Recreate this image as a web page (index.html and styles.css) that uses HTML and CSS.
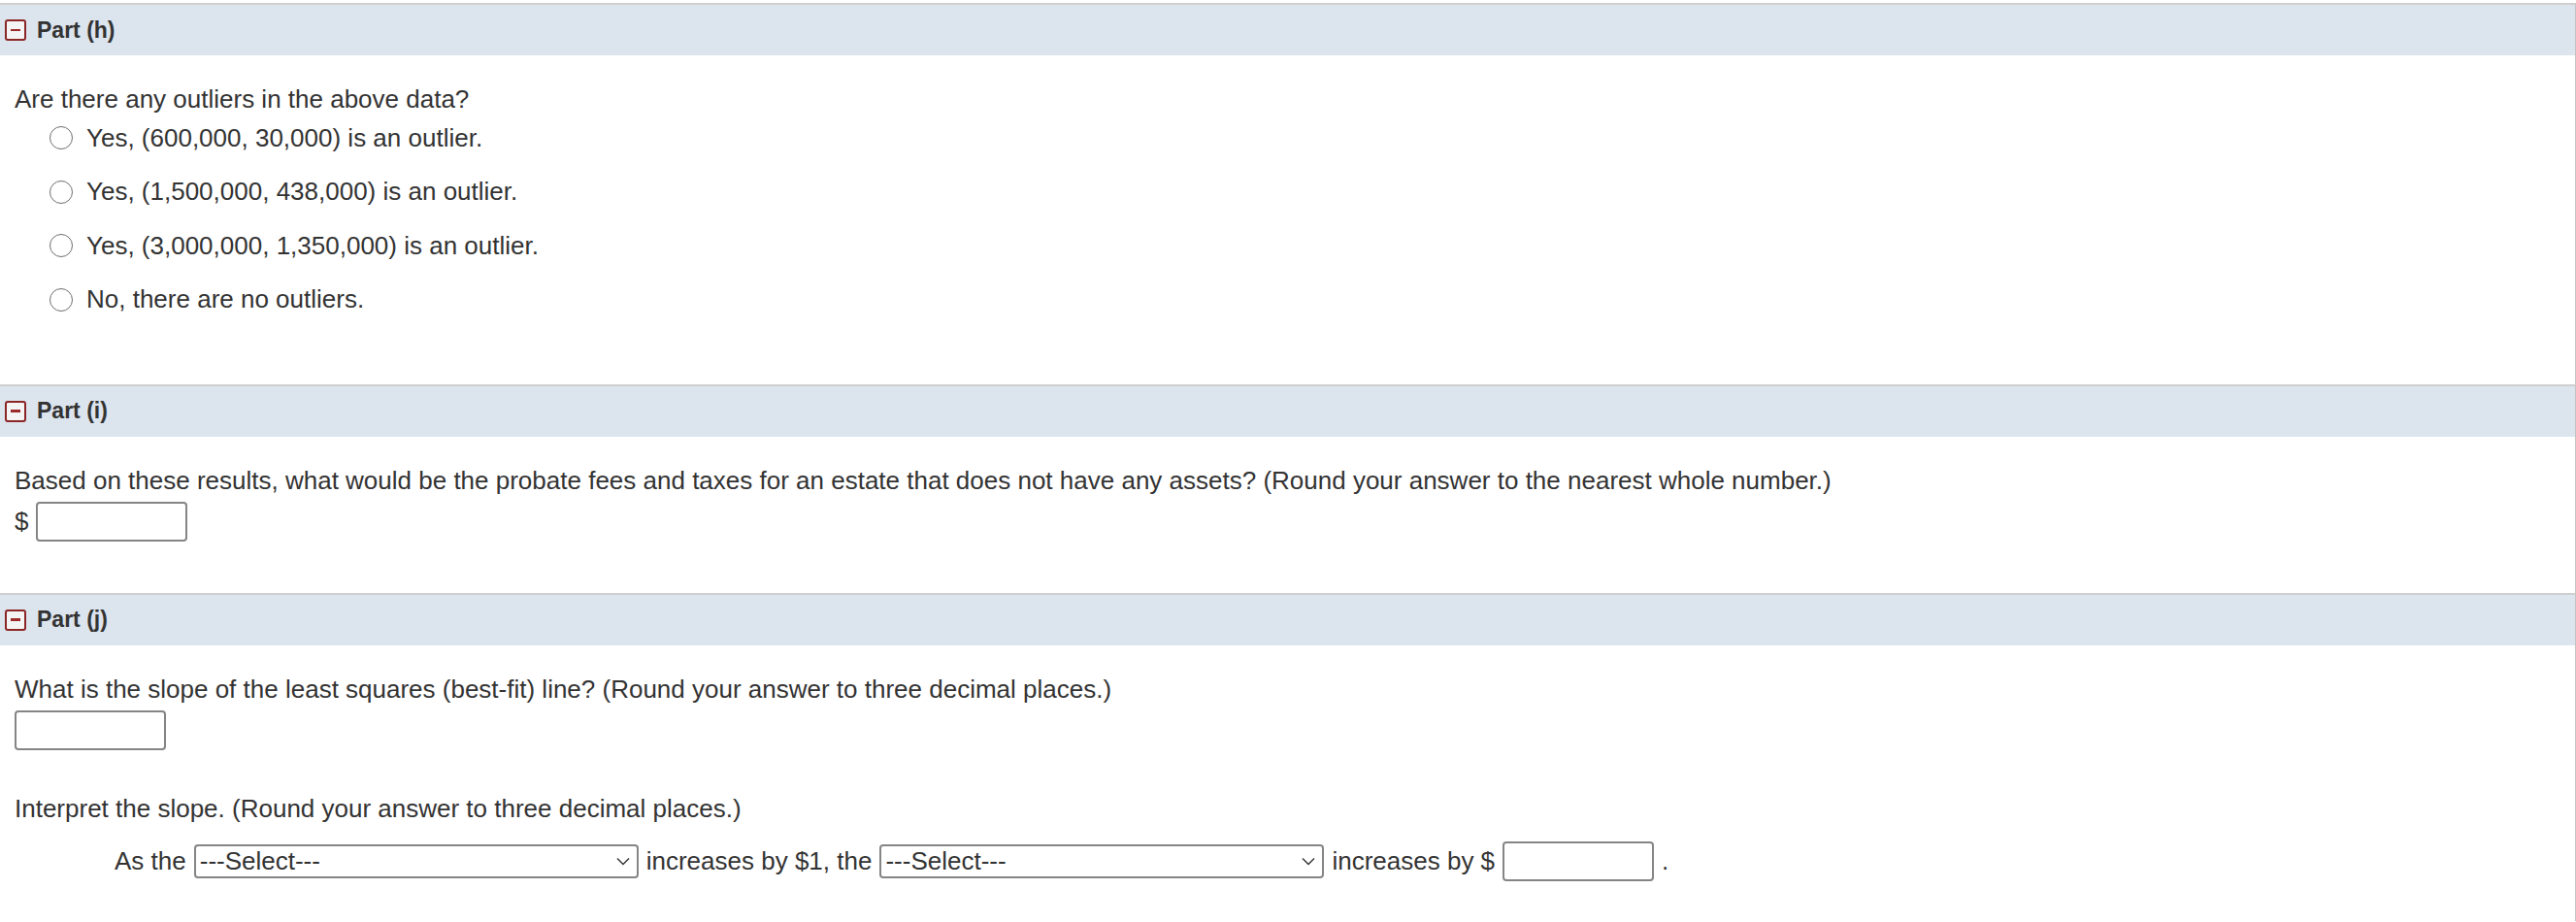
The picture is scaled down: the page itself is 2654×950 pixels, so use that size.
FILE: index.html
```html
<!DOCTYPE html>
<html lang="en">
<head>
<meta charset="utf-8">
<title>Parts h, i, j</title>
<link rel="stylesheet" href="styles.css">
</head>
<body>
<div class="page">
  <section class="part part-h">
    <div class="part-header">
      <span class="toggle"><span class="minus"></span></span>
      <span class="part-title">Part (h)</span>
    </div>
    <div class="part-body">
      <p class="q">Are there any outliers in the above data?</p>
      <ul class="options">
        <li class="option"><span class="radio"></span><span>Yes, (600,000, 30,000) is an outlier.</span></li>
        <li class="option"><span class="radio"></span><span>Yes, (1,500,000, 438,000) is an outlier.</span></li>
        <li class="option"><span class="radio"></span><span>Yes, (3,000,000, 1,350,000) is an outlier.</span></li>
        <li class="option"><span class="radio"></span><span>No, there are no outliers.</span></li>
      </ul>
    </div>
  </section>

  <section class="part part-i">
    <div class="part-header">
      <span class="toggle"><span class="minus"></span></span>
      <span class="part-title">Part (i)</span>
    </div>
    <div class="part-body">
      <p class="q">Based on these results, what would be the probate fees and taxes for an estate that does not have any assets? (Round your answer to the nearest whole number.)</p>
      <div class="answer-row">
        <span>$</span>
        <span class="textbox"></span>
      </div>
    </div>
  </section>

  <section class="part part-j">
    <div class="part-header">
      <span class="toggle"><span class="minus"></span></span>
      <span class="part-title">Part (j)</span>
    </div>
    <div class="part-body">
      <p class="q">What is the slope of the least squares (best-fit) line? (Round your answer to three decimal places.)</p>
      <div class="answer-row">
        <span class="textbox"></span>
      </div>
      <p class="q q-interpret">Interpret the slope. (Round your answer to three decimal places.)</p>
      <div class="slope-row">
        <span>As the</span>
        <span class="select">
          <span class="select-text">---Select---</span>
          <svg class="chev" width="14" height="9" viewBox="0 0 14 9"><path d="M1 1.5 L7 7.5 L13 1.5" fill="none" stroke="#333" stroke-width="1.4"/></svg>
        </span>
        <span>increases by $1, the</span>
        <span class="select">
          <span class="select-text">---Select---</span>
          <svg class="chev" width="14" height="9" viewBox="0 0 14 9"><path d="M1 1.5 L7 7.5 L13 1.5" fill="none" stroke="#333" stroke-width="1.4"/></svg>
        </span>
        <span>increases by $</span>
        <span class="textbox"></span>
        <span>.</span>
      </div>
    </div>
  </section>
</div>
</body>
</html>
```
FILE: styles.css
```css
html, body {
  margin: 0;
  padding: 0;
  background: #ffffff;
}

body {
  font-family: "Liberation Sans", Arial, Helvetica, sans-serif;
  font-size: 26px;
  color: #333333;
}

.page {
  padding-top: 3px;
  width: 2654px;
  box-sizing: border-box;
}

.part {
  border-top: 2px solid #cfcfcf;
  border-right: 1px solid #c4c4c4;
}

.part-header {
  height: 52px;
  display: flex;
  align-items: center;
  gap: 11px;
  padding-left: 5px;
  background: #dce4ed;
}

.toggle {
  width: 18px;
  height: 18px;
  border: 2px solid #8c2626;
  border-radius: 3px;
  background: #f4f4f4;
  display: flex;
  align-items: center;
  justify-content: center;
  flex: none;
}

.minus {
  width: 10px;
  height: 2.5px;
  background: #9c2a2a;
}

.part-title {
  font-weight: bold;
  font-size: 23px;
  color: #333333;
}

.part-body {
  padding: 30px 15px 0 15px;
}

.q {
  margin: 0;
  line-height: 30px;
}

.options {
  list-style: none;
  margin: 10px 0 0 0;
  padding: 0 0 0 36px;
  display: flex;
  flex-direction: column;
  gap: 25.5px;
}

.option {
  height: 30px;
  display: flex;
  align-items: center;
  gap: 14px;
}

.radio {
  width: 22px;
  height: 22px;
  border: 1.6px solid #6e6e6e;
  border-radius: 50%;
  flex: none;
  background: #ffffff;
}

.part-h .part-body {
  padding-bottom: 72px;
}

.part-i .part-body {
  padding-bottom: 53px;
}

.part-j .part-body {
  padding-bottom: 41px;
}

.answer-row {
  margin-top: 7px;
  height: 41px;
  display: flex;
  align-items: center;
  gap: 8px;
}

.textbox {
  display: block;
  width: 156px;
  height: 41px;
  box-sizing: border-box;
  border: 2px solid #858585;
  border-radius: 4px;
  background: #ffffff;
  flex: none;
}

.q-interpret {
  margin-top: 45px;
}

.slope-row {
  margin-top: 19px;
  height: 41px;
  padding-left: 103px;
  display: flex;
  align-items: center;
  gap: 8px;
}

.select {
  position: relative;
  width: 458px;
  height: 35px;
  box-sizing: border-box;
  border: 2px solid #858585;
  border-radius: 4px;
  background: #ffffff;
  display: flex;
  align-items: center;
  padding-left: 4px;
  flex: none;
}

.select-text {
  font-size: 26px;
  color: #333333;
}

.chev {
  position: absolute;
  right: 7px;
  top: 11px;
}
```
